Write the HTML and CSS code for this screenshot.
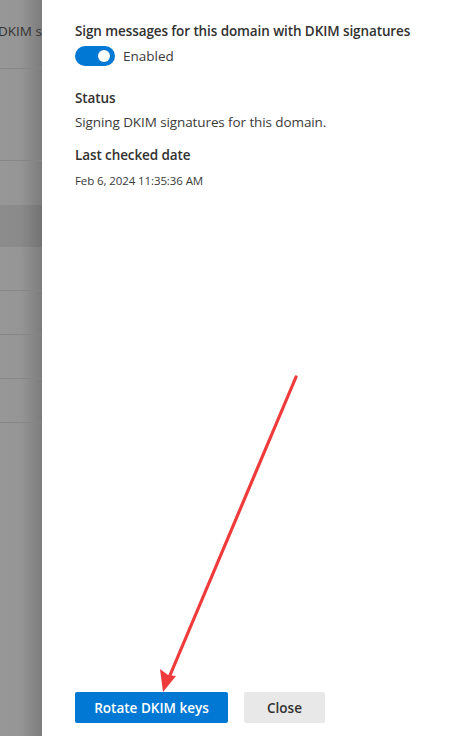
FILE: index.html
```html
<!DOCTYPE html>
<html lang="en">
<head>
    <meta charset="UTF-8">
    <meta name="viewport" content="width=device-width, initial-scale=1.0">
    <title>DKIM</title>
    <link rel="stylesheet" href="styles.css">
</head>
<body>
    <div class="backdrop">
        <div class="bg-row bg-first"><span class="bg-text">DKIM si</span></div>
        <div class="bg-row bg-tall"></div>
        <div class="bg-row bg-plain"></div>
        <div class="bg-row bg-selected"></div>
        <div class="bg-row"></div>
        <div class="bg-row"></div>
        <div class="bg-row"></div>
        <div class="bg-row"></div>
    </div>

    <div class="panel">
        <div class="panel-body">
            <div class="field">
                <div class="field-label">Sign messages for this domain with DKIM signatures</div>
                <div class="toggle-row">
                    <span class="toggle"><span class="knob"></span></span>
                    <span class="toggle-text">Enabled</span>
                </div>
            </div>
            <div class="field">
                <div class="field-label">Status</div>
                <div class="field-value">Signing DKIM signatures for this domain.</div>
            </div>
            <div class="field">
                <div class="field-label">Last checked date</div>
                <div class="field-value small">Feb 6, 2024 11:35:36 AM</div>
            </div>
        </div>
        <div class="panel-footer">
            <button class="btn primary">Rotate DKIM keys</button>
            <button class="btn">Close</button>
        </div>
    </div>

    <svg class="arrow" width="459" height="736" viewBox="0 0 459 736">
        <line x1="296" y1="377" x2="168" y2="680" stroke="#ef3b3b" stroke-width="3.2" stroke-linecap="round"/>
        <polygon points="163,692 160,669 168,675 176,676" fill="#ef3b3b"/>
    </svg>
</body>
</html>
```

FILE: styles.css
```css
body {
    margin: 0;
    height: 736px;
    display: flex;
    font-family: 'Open Sans', 'Noto Sans', sans-serif;
    color: #323130;
    overflow: hidden;
}

.backdrop {
    width: 42px;
    flex-shrink: 0;
    overflow: hidden;
    background: linear-gradient(to right, #979797 0%, #959595 50%, #7c7c7c 100%);
}

.bg-row {
    height: 43px;
    border-bottom: 1px solid #868686;
}

.bg-first {
    height: 68px;
    display: flex;
    align-items: center;
}

.bg-text {
    display: block;
    width: 44px;
    margin-left: -2px;
    overflow: hidden;
    white-space: nowrap;
    font-size: 13.5px;
    color: #333;
    padding-bottom: 6px;
}

.bg-tall {
    height: 91px;
}

.bg-plain {
    height: 44px;
    border-bottom: none;
}

.bg-selected {
    height: 42px;
    background: rgba(0, 0, 0, 0.07);
    border-bottom: none;
}

.panel {
    flex: 1;
    background: #fff;
    display: flex;
    flex-direction: column;
    padding: 0 33px;
}

.panel-body {
    flex: 1;
    padding-top: 21px;
}

.field {
    margin-bottom: 12px;
}

.field-label {
    font-size: 13.5px;
    font-weight: 600;
    line-height: 20px;
    letter-spacing: -0.1px;
}

.field-value {
    font-size: 13.5px;
    line-height: 22px;
    margin-top: 3px;
    color: #3b3a39;
    letter-spacing: -0.1px;
}

.field-value.small {
    font-size: 11.5px;
    margin-top: 5px;
}

.toggle-row {
    display: flex;
    align-items: center;
    margin-top: 5px;
    margin-bottom: 22px;
}

.toggle {
    width: 40px;
    height: 20px;
    border-radius: 10px;
    background: #0078d4;
    position: relative;
    margin-right: 8px;
}

.knob {
    position: absolute;
    width: 12px;
    height: 12px;
    border-radius: 50%;
    background: #fff;
    top: 4px;
    right: 5px;
}

.toggle-text {
    font-size: 13.5px;
    color: #3b3a39;
}

.panel-footer {
    display: flex;
    gap: 16px;
    padding-bottom: 13px;
}

.btn {
    height: 31px;
    padding: 0;
    white-space: nowrap;
    font-family: inherit;
    font-size: 13.5px;
    font-weight: 600;
    border: none;
    border-radius: 2px;
    background: #e8e8e8;
    color: #323130;
    width: 81px;
}

.btn.primary {
    background: #0078d4;
    color: #fff;
    width: 153px;
}

.arrow {
    position: absolute;
    left: 0;
    top: 0;
    pointer-events: none;
}
```
